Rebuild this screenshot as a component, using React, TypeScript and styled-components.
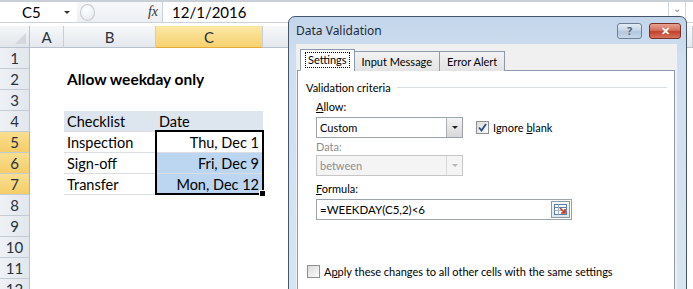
import styled, { createGlobalStyle } from "styled-components";

const GlobalStyle = createGlobalStyle`
  html, body {
    margin: 0;
    padding: 0;
    background: #ffffff;
  }
  body {
    font-family: "Lato", "Liberation Sans", sans-serif;
  }
`;

const ROW_COUNT = 12;
const CELL_FONT = `"Lato", "Liberation Sans", sans-serif`;
const UI_FONT = `"Lato", "Noto Sans", sans-serif`;

const Screen = styled.div`
  position: relative;
  width: 693px;
  height: 289px;
  overflow: hidden;
  background: #ffffff;
`;

/* ---------- formula bar ---------- */

const FormulaBar = styled.div`
  display: flex;
  height: 20px;
  border-top: 2px solid #c9cfd6;
  border-bottom: 1px solid #c9d2dd;
  margin-bottom: 3px;
  font-family: ${CELL_FONT};
  font-size: 15px;
  color: #000;
`;

const NameBox = styled.div`
  width: 77px;
  display: flex;
  align-items: center;
  padding-left: 22px;
  box-sizing: border-box;
  position: relative;
`;

const DropArrow = styled.span`
  position: absolute;
  right: 7px;
  top: 9px;
  border-left: 3px solid transparent;
  border-right: 3px solid transparent;
  border-top: 3px solid #333;
`;

const Middle = styled.div`
  width: 86px;
  display: flex;
  align-items: center;
  justify-content: space-between;
  padding: 0 4px 0 3px;
  box-sizing: border-box;
  background: linear-gradient(#f7f8fa, #eceff3);
  border-right: 1px solid #cdd3da;
`;

const Grip = styled.span`
  width: 15px;
  height: 17px;
  border-radius: 50%;
  border: 1px solid #c3c8cf;
  background: radial-gradient(circle at 40% 30%, #ffffff, #e3e6ea);
  box-sizing: border-box;
`;

const Fx = styled.span`
  font-family: "Liberation Serif", serif;
  font-style: italic;
  font-size: 14px;
  color: #333;
`;

const FormulaText = styled.div`
  flex: 1;
  display: flex;
  align-items: center;
  padding-left: 9px;
  border-right: 1px solid #d0d6dd;
`;

const Expand = styled.div`
  width: 16px;
  display: flex;
  align-items: flex-start;
  justify-content: center;
  margin-right: 7px;
  border-right: 1px solid #d0d6dd;
  color: #7b8694;
  font-size: 10px;
  font-family: ${UI_FONT};
`;

/* ---------- sheet grid ---------- */

const Grid = styled.div`
  position: relative;
  display: grid;
  grid-template-columns: 30px 34px 92px 107px 1fr;
  grid-template-rows: 22px repeat(${ROW_COUNT}, 21px);
  font-family: ${CELL_FONT};
  font-size: 14.5px;
  color: #000;
`;

const Corner = styled.div`
  background: linear-gradient(#f5f6f8, #e1e5ea);
  border-right: 1px solid #b9c2cc;
  border-bottom: 1px solid #b9c2cc;
  position: relative;
  &::after {
    content: "";
    position: absolute;
    right: 3px;
    bottom: 3px;
    border-left: 11px solid transparent;
    border-bottom: 11px solid #d3d8de;
  }
`;

const ColHead = styled.div<{ $active?: boolean }>`
  display: flex;
  align-items: center;
  justify-content: center;
  font-size: 15px;
  color: #27323e;
  border-right: 1px solid #c7ced6;
  border-bottom: 1px solid ${(p) => (p.$active ? "#e3a93a" : "#b9c2cc")};
  background: ${(p) =>
    p.$active
      ? "linear-gradient(#fbe7a6, #f7d26f)"
      : "linear-gradient(#f7f8fa, #e4e8ed)"};
`;

const RowHead = styled.div<{ $active?: boolean }>`
  display: flex;
  align-items: center;
  justify-content: center;
  font-size: 15px;
  color: #27323e;
  border-right: 1px solid ${(p) => (p.$active ? "#e3a93a" : "#b9c2cc")};
  border-bottom: 1px solid #c3cbd4;
  background: ${(p) =>
    p.$active
      ? "linear-gradient(#f9df90, #f5cd68)"
      : "linear-gradient(90deg, #eef1f5, #e2e7ed)"};
`;

const Cell = styled.div<{
  $head?: boolean;
  $table?: boolean;
  $sel?: boolean;
  $right?: boolean;
  $bold?: boolean;
}>`
  display: flex;
  align-items: flex-end;
  justify-content: ${(p) => (p.$right ? "flex-end" : "flex-start")};
  padding: 0 4px 1px 3px;
  white-space: nowrap;
  overflow: visible;
  font-weight: ${(p) => (p.$bold ? 700 : 400)};
  font-size: ${(p) => (p.$bold ? "15.5px" : "14.5px")};
  background: ${(p) =>
    p.$head ? "#dde5ef" : p.$sel ? "#bcd5f1" : "transparent"};
  border-bottom: 1px solid ${(p) => (p.$table ? "#dadde2" : "transparent")};
  box-sizing: border-box;
`;

const Selection = styled.div`
  position: absolute;
  left: 155px;
  top: 104px;
  width: 109px;
  height: 65px;
  border: 2px solid #000;
  box-sizing: border-box;
  pointer-events: none;
  &::after {
    content: "";
    position: absolute;
    right: -4px;
    bottom: -4px;
    width: 5px;
    height: 5px;
    background: #000;
    border: 1px solid #fff;
  }
`;

/* ---------- dialog ---------- */

const Dialog = styled.div`
  position: absolute;
  left: 288px;
  top: 16px;
  width: 399px;
  height: 285px;
  box-sizing: border-box;
  border: 1px solid #45566b;
  border-radius: 7px 7px 0 0;
  background: linear-gradient(#c3d5ea, #cfdff1 40px, #d7e4f3);
  padding: 0 9px 0 7px;
  display: flex;
  flex-direction: column;
  font-family: ${UI_FONT};
  font-size: 11px;
  color: #000;
`;

const TitleBar = styled.div`
  height: 27px;
  display: flex;
  align-items: center;
  justify-content: space-between;
  font-family: "Noto Sans", sans-serif;
  font-size: 12px;
  color: #1e2a36;
`;

const TitleButtons = styled.div`
  display: flex;
  gap: 7px;
  margin-right: -4px;
`;

const CaptionButton = styled.div<{ $close?: boolean }>`
  width: ${(p) => (p.$close ? "32px" : "25px")};
  height: 16px;
  box-sizing: border-box;
  border: 1px solid ${(p) => (p.$close ? "#7a3128" : "#6d7f96")};
  border-radius: 3px;
  display: flex;
  align-items: center;
  justify-content: center;
  font-weight: 700;
  font-size: 11px;
  color: ${(p) => (p.$close ? "#ffffff" : "#55677d")};
  background: ${(p) =>
    p.$close
      ? "linear-gradient(#e6a394, #d46f5c 45%, #c2412c 55%, #d6735d)"
      : "linear-gradient(#e2ebf5, #c7d6e8 45%, #b3c6dd 55%, #c8d8ea)"};
`;

const Client = styled.div`
  flex: 1;
  background: #f0f0f0;
  padding: 6px 2px 0 1px;
  display: flex;
  flex-direction: column;
`;

const Tabs = styled.div`
  display: flex;
  align-items: flex-end;
  padding-left: 3px;
  height: 21px;
  position: relative;
  z-index: 1;
  margin-bottom: -1px;
`;

const Tab = styled.div<{ $active?: boolean }>`
  height: ${(p) => (p.$active ? "22px" : "20px")};
  padding: 0 ${(p) => (p.$active ? "5px" : "7px")};
  margin-left: ${(p) => (p.$active ? "0" : "-1px")};
  box-sizing: border-box;
  display: flex;
  align-items: center;
  border: 1px solid #8c9aab;
  border-bottom: ${(p) => (p.$active ? "1px solid #ffffff" : "none")};
  background: ${(p) =>
    p.$active ? "#ffffff" : "linear-gradient(#f2f2f2, #e3e3e3)"};
`;

const FocusLabel = styled.span`
  outline: 1px dotted #000;
  padding: 0 2px;
  line-height: 14px;
`;

const Page = styled.div`
  flex: 1;
  background: #ffffff;
  border: 1px solid #8c9aab;
  padding: 8px 7px 0 8px;
  display: flex;
  flex-direction: column;
`;

const Legend = styled.div`
  display: flex;
  align-items: center;
  gap: 6px;
  height: 16px;
  &::after {
    content: "";
    flex: 1;
    height: 1px;
    background: #d5dfe5;
  }
`;

const Section = styled.div`
  padding-left: 10px;
  display: flex;
  flex-direction: column;
`;

const Label = styled.div<{ $disabled?: boolean; $top: number; $gap: number }>`
  height: 15px;
  line-height: 15px;
  margin-top: ${(p) => p.$top}px;
  margin-bottom: ${(p) => p.$gap}px;
  color: ${(p) => (p.$disabled ? "#8d8d8d" : "#000")};
`;

const Row = styled.div`
  display: flex;
  align-items: center;
  gap: 13px;
`;

const Select = styled.div<{ $disabled?: boolean }>`
  width: 147px;
  height: 21px;
  box-sizing: border-box;
  border: 1px solid ${(p) => (p.$disabled ? "#c6c6c6" : "#9ba3ad")};
  background: ${(p) => (p.$disabled ? "#f4f4f4" : "#ffffff")};
  color: ${(p) => (p.$disabled ? "#8d8d8d" : "#000")};
  display: flex;
  align-items: center;
  justify-content: space-between;
  padding-left: 3px;
`;

const SelectButton = styled.div<{ $disabled?: boolean }>`
  width: 16px;
  height: 19px;
  box-sizing: border-box;
  border-left: 1px solid ${(p) => (p.$disabled ? "#d9d9d9" : "#a9b1bb")};
  background: ${(p) =>
    p.$disabled ? "#f4f4f4" : "linear-gradient(#f4f4f4, #d7d7d7)"};
  display: flex;
  align-items: center;
  justify-content: center;
  &::after {
    content: "";
    border-left: 3px solid transparent;
    border-right: 3px solid transparent;
    border-top: 3px solid ${(p) => (p.$disabled ? "#b5b5b5" : "#222")};
  }
`;

const Check = styled.span`
  width: 13px;
  height: 13px;
  box-sizing: border-box;
  border: 1px solid #8e8f8f;
  background: linear-gradient(135deg, #dcdcdc, #fbfbfb);
  display: inline-flex;
  align-items: center;
  justify-content: center;
  flex: none;
`;

const CheckField = styled.label`
  display: flex;
  align-items: center;
  gap: 4px;
`;

const FormulaInput = styled.div`
  width: 256px;
  height: 21px;
  box-sizing: border-box;
  border: 1px solid #9ba3ad;
  display: flex;
  align-items: center;
  justify-content: space-between;
  padding: 0 1px 0 3px;
  font-size: 11.5px;
`;

const RangeButton = styled.div`
  width: 19px;
  height: 17px;
  box-sizing: border-box;
  border: 1px solid #8d98a6;
  background: linear-gradient(#f7f9fb, #dfe5ec);
  display: flex;
  align-items: center;
  justify-content: center;
`;

const Footer = styled.div`
  margin-top: 45px;
  margin-left: 1px;
`;

const U = styled.span`
  text-decoration: underline;
`;

const tableRows = [
  { label: "Inspection", date: "Thu, Dec 1", sel: false },
  { label: "Sign-off", date: "Fri, Dec 9", sel: true },
  { label: "Transfer", date: "Mon, Dec 12", sel: true },
];

function renderRow(r: number) {
  const active = r >= 5 && r <= 7;
  const cells = [];
  cells.push(
    <RowHead key={`h${r}`} $active={active}>
      {r}
    </RowHead>,
  );
  cells.push(<Cell key={`a${r}`} />);
  if (r === 2) {
    cells.push(
      <Cell key={`b${r}`} $bold>
        Allow weekday only
      </Cell>,
    );
    cells.push(<Cell key={`c${r}`} />);
  } else if (r === 4) {
    cells.push(
      <Cell key={`b${r}`} $head $table>
        Checklist
      </Cell>,
    );
    cells.push(
      <Cell key={`c${r}`} $head $table>
        Date
      </Cell>,
    );
  } else if (active) {
    const row = tableRows[r - 5];
    cells.push(
      <Cell key={`b${r}`} $table>
        {row.label}
      </Cell>,
    );
    cells.push(
      <Cell key={`c${r}`} $table $sel={row.sel} $right>
        {row.date}
      </Cell>,
    );
  } else {
    cells.push(<Cell key={`b${r}`} />);
    cells.push(<Cell key={`c${r}`} />);
  }
  cells.push(<Cell key={`d${r}`} />);
  return cells;
}

function RangeIcon() {
  return (
    <svg width="13" height="11" viewBox="0 0 13 11">
      <rect x="0.5" y="0.5" width="12" height="10" fill="#ffffff" stroke="#5a7fae" />
      <line x1="0.5" y1="3.5" x2="12.5" y2="3.5" stroke="#5a7fae" />
      <line x1="0.5" y1="6.5" x2="12.5" y2="6.5" stroke="#9fb6d3" />
      <line x1="4.5" y1="0.5" x2="4.5" y2="10.5" stroke="#9fb6d3" />
      <path d="M6 4 L11 9 M11 5 L11 9 L7 9" stroke="#d2321e" strokeWidth="1.6" fill="none" />
    </svg>
  );
}

function CheckMark() {
  return (
    <svg width="9" height="9" viewBox="0 0 9 9">
      <path d="M1 4.5 L3.5 7.5 L8 1" stroke="#2a4a8c" strokeWidth="1.8" fill="none" />
    </svg>
  );
}

export default function App() {
  return (
    <Screen>
      <GlobalStyle />
      <FormulaBar>
        <NameBox>
          C5
          <DropArrow />
        </NameBox>
        <Middle>
          <Grip />
          <Fx>fx</Fx>
        </Middle>
        <FormulaText>12/1/2016</FormulaText>
        <Expand>⌄</Expand>
      </FormulaBar>

      <Grid>
        <Corner />
        <ColHead>A</ColHead>
        <ColHead>B</ColHead>
        <ColHead $active>C</ColHead>
        <ColHead />
        {Array.from({ length: ROW_COUNT }, (_, i) => renderRow(i + 1))}
        <Selection />
      </Grid>

      <Dialog>
        <TitleBar>
          <span>Data Validation</span>
          <TitleButtons>
            <CaptionButton>?</CaptionButton>
            <CaptionButton $close>✕</CaptionButton>
          </TitleButtons>
        </TitleBar>
        <Client>
          <Tabs>
            <Tab $active>
              <FocusLabel>Settings</FocusLabel>
            </Tab>
            <Tab>Input Message</Tab>
            <Tab>Error Alert</Tab>
          </Tabs>
          <Page>
            <Legend>Validation criteria</Legend>
            <Section>
              <Label $top={4} $gap={3}>
                <U>A</U>llow:
              </Label>
              <Row>
                <Select>
                  Custom
                  <SelectButton />
                </Select>
                <CheckField>
                  <Check>
                    <CheckMark />
                  </Check>
                  <span>
                    Ignore <U>b</U>lank
                  </span>
                </CheckField>
              </Row>
              <Label $disabled $top={1} $gap={1}>
                Data:
              </Label>
              <Select $disabled>
                between
                <SelectButton $disabled />
              </Select>
              <Label $top={5} $gap={3}>
                <U>F</U>ormula:
              </Label>
              <FormulaInput>
                =WEEKDAY(C5,2)&lt;6
                <RangeButton>
                  <RangeIcon />
                </RangeButton>
              </FormulaInput>
            </Section>
            <Footer>
              <CheckField>
                <Check />
                <span>
                  A<U>p</U>ply these changes to all other cells with the same
                  settings
                </span>
              </CheckField>
            </Footer>
          </Page>
        </Client>
      </Dialog>
    </Screen>
  );
}
